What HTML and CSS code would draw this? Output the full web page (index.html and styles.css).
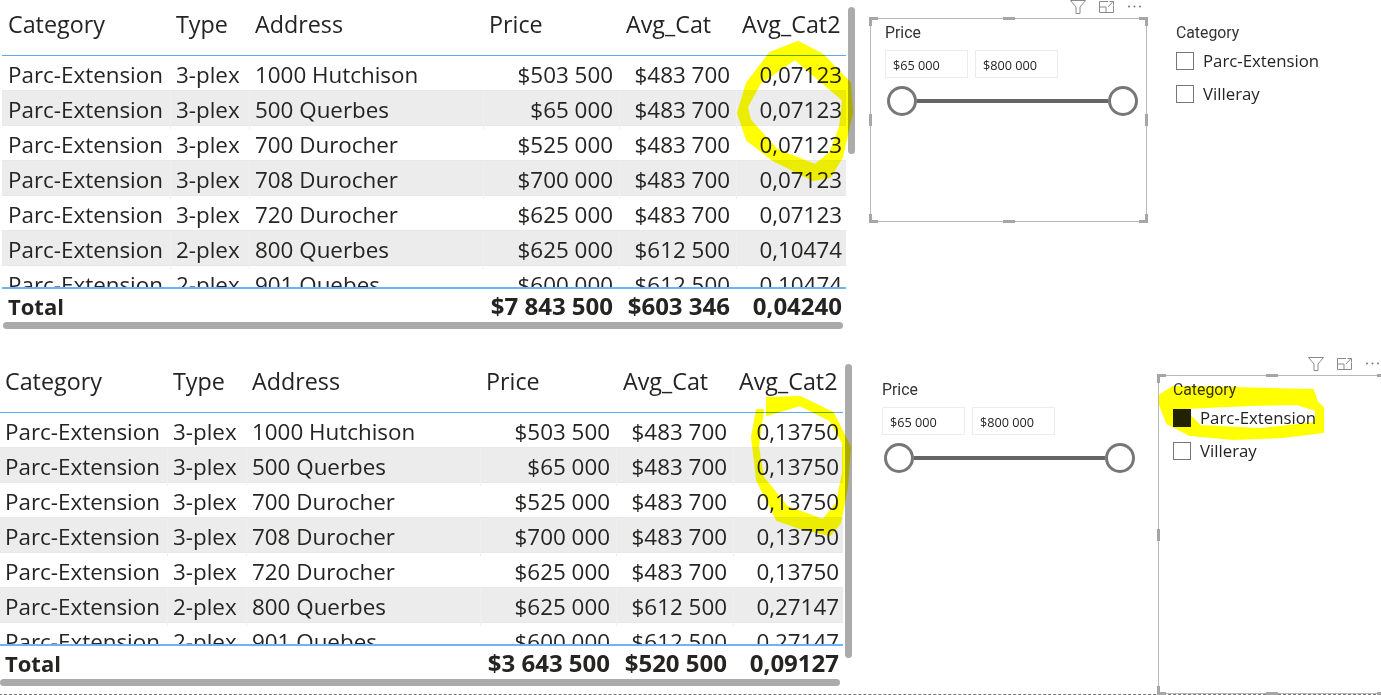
FILE: index.html
```html
<!DOCTYPE html>
<html>
<head>
	<title>Price slicer vs Category slicer</title>
	<link rel="stylesheet" href="styles.css">
</head>
<body>
	<div class="report">

		<!-- top: only the price slicer is selected -->
		<section class="page first">
			<div class="matrix">
				<div class="cols head">
					<div>Category</div><div>Type</div><div>Address</div><div>Price</div><div>Avg_Cat</div><div>Avg_Cat2</div>
				</div>
				<div class="rows">
					<div class="cols line"><div>Parc-Extension</div><div>3-plex</div><div>1000 Hutchison</div><div class="num">$503 500</div><div class="num">$483 700</div><div class="num">0,07123</div></div>
					<div class="cols line"><div>Parc-Extension</div><div>3-plex</div><div>500 Querbes</div><div class="num">$65 000</div><div class="num">$483 700</div><div class="num">0,07123</div></div>
					<div class="cols line"><div>Parc-Extension</div><div>3-plex</div><div>700 Durocher</div><div class="num">$525 000</div><div class="num">$483 700</div><div class="num">0,07123</div></div>
					<div class="cols line"><div>Parc-Extension</div><div>3-plex</div><div>708 Durocher</div><div class="num">$700 000</div><div class="num">$483 700</div><div class="num">0,07123</div></div>
					<div class="cols line"><div>Parc-Extension</div><div>3-plex</div><div>720 Durocher</div><div class="num">$625 000</div><div class="num">$483 700</div><div class="num">0,07123</div></div>
					<div class="cols line"><div>Parc-Extension</div><div>2-plex</div><div>800 Querbes</div><div class="num">$625 000</div><div class="num">$612 500</div><div class="num">0,10474</div></div>
					<div class="cols line"><div>Parc-Extension</div><div>2-plex</div><div>901 Quebes</div><div class="num">$600 000</div><div class="num">$612 500</div><div class="num">0,10474</div></div>
				</div>
				<div class="cols total">
					<div>Total</div><div></div><div></div><div class="num">$7 843 500</div><div class="num">$603 346</div><div class="num">0,04240</div>
				</div>
				<div class="vbar short"></div>
				<div class="hbar"></div>
			</div>

			<div class="slicer price selected">
				<div class="visual-head">
					<svg class="ico-filter" viewBox="0 0 16 14"><path d="M.5.5h15L10 7v6.5H6V7z"/></svg>
					<svg class="ico-focus" viewBox="0 0 15 12"><path d="M9 .5H.5v11h14V5M.5 6h6.500v5.500M9 6l5-5.500M10.500.500h4v4"/></svg>
					<svg class="ico-dots" viewBox="0 0 15 3"><circle cx="2" cy="1.500" r="1"/><circle cx="7.500" cy="1.500" r="1"/><circle cx="13" cy="1.500" r="1"/></svg>
				</div>
				<span class="grip tl"></span><span class="grip tr"></span><span class="grip bl"></span><span class="grip br"></span>
				<span class="grip tm"></span><span class="grip bm"></span><span class="grip ml"></span><span class="grip mr"></span>
				<div class="slicer-title">Price</div>
				<div class="inputs">
					<div class="input">$65 000</div>
					<div class="input">$800 000</div>
				</div>
				<div class="slider"><span class="knob"></span><span class="track"></span><span class="knob"></span></div>
			</div>

			<div class="slicer category">
				<div class="slicer-title">Category</div>
				<div class="option"><span class="box"></span>Parc-Extension</div>
				<div class="option"><span class="box"></span>Villeray</div>
			</div>
		</section>

		<!-- bottom: the category slicer is selected -->
		<section class="page second">
			<div class="matrix">
				<div class="cols head">
					<div>Category</div><div>Type</div><div>Address</div><div>Price</div><div>Avg_Cat</div><div>Avg_Cat2</div>
				</div>
				<div class="rows">
					<div class="cols line"><div>Parc-Extension</div><div>3-plex</div><div>1000 Hutchison</div><div class="num">$503 500</div><div class="num">$483 700</div><div class="num">0,13750</div></div>
					<div class="cols line"><div>Parc-Extension</div><div>3-plex</div><div>500 Querbes</div><div class="num">$65 000</div><div class="num">$483 700</div><div class="num">0,13750</div></div>
					<div class="cols line"><div>Parc-Extension</div><div>3-plex</div><div>700 Durocher</div><div class="num">$525 000</div><div class="num">$483 700</div><div class="num">0,13750</div></div>
					<div class="cols line"><div>Parc-Extension</div><div>3-plex</div><div>708 Durocher</div><div class="num">$700 000</div><div class="num">$483 700</div><div class="num">0,13750</div></div>
					<div class="cols line"><div>Parc-Extension</div><div>3-plex</div><div>720 Durocher</div><div class="num">$625 000</div><div class="num">$483 700</div><div class="num">0,13750</div></div>
					<div class="cols line"><div>Parc-Extension</div><div>2-plex</div><div>800 Querbes</div><div class="num">$625 000</div><div class="num">$612 500</div><div class="num">0,27147</div></div>
					<div class="cols line"><div>Parc-Extension</div><div>2-plex</div><div>901 Quebes</div><div class="num">$600 000</div><div class="num">$612 500</div><div class="num">0,27147</div></div>
				</div>
				<div class="cols total">
					<div>Total</div><div></div><div></div><div class="num">$3 643 500</div><div class="num">$520 500</div><div class="num">0,09127</div>
				</div>
				<div class="vbar long"></div>
				<div class="hbar"></div>
			</div>

			<div class="slicer price">
				<div class="slicer-title">Price</div>
				<div class="inputs">
					<div class="input">$65 000</div>
					<div class="input">$800 000</div>
				</div>
				<div class="slider"><span class="knob"></span><span class="track"></span><span class="knob"></span></div>
			</div>

			<div class="slicer category tall selected">
				<div class="visual-head">
					<svg class="ico-filter" viewBox="0 0 16 14"><path d="M.5.5h15L10 7v6.500H6V7z"/></svg>
					<svg class="ico-focus" viewBox="0 0 15 12"><path d="M9 .5H.5v11h14V5M.5 6h6.500v5.500M9 6l5-5.500M10.500.500h4v4"/></svg>
					<svg class="ico-dots" viewBox="0 0 15 3"><circle cx="2" cy="1.500" r="1"/><circle cx="7.500" cy="1.500" r="1"/><circle cx="13" cy="1.500" r="1"/></svg>
				</div>
				<span class="grip tl"></span><span class="grip tr"></span><span class="grip bl"></span><span class="grip br"></span>
				<span class="grip tm"></span><span class="grip bm"></span><span class="grip ml"></span><span class="grip mr"></span>
				<div class="slicer-title">Category</div>
				<div class="option"><span class="box checked"></span>Parc-Extension</div>
				<div class="option"><span class="box"></span>Villeray</div>
			</div>
		</section>

		<!-- marker scribbles drawn over the screenshot -->
		<svg class="marker" viewBox="0 0 1381 695">
			<path fill-rule="evenodd" d="M798 42L823 55L850 83L852 113L842 157L830 177L813 180L773 160L747 140L738 113L747 83L770 53ZM795 59L760 83L747 107L750 120L777 150L815 165L830 153L840 127L843 100Z"/>
			<path d="M767 398L800 397L833 413L850 447L847 487L840 523L830 535L800 528L777 520L757 480L752 437L757 410L763 410L758 447L763 477L787 507L823 520L837 503L843 473L843 443L830 420L800 405L767 415Z"/>
			<path fill-rule="evenodd" d="M1160 395L1173 387L1233 388L1313 390L1317 402L1323 408L1323 432L1283 437L1233 439L1190 435L1167 423L1160 405ZM1185 408L1183 410L1192 418L1200 426L1260 429L1316 423L1316 410L1297 404L1250 405Z"/>
		</svg>
	</div>
</body>
</html>
```

FILE: styles.css
```css
html, body {
	margin: 0;
	height: 100%;
	background: #fff;
	overflow: hidden;
}

.report {
	position: relative;
	width: 1381px;
	height: 695px;
	overflow: hidden;
	color: #252423;
	font-family: "Open Sans", "Noto Sans", sans-serif;
}

.page {
	display: flex;
	align-items: flex-start;
	box-sizing: border-box;
	height: 357px;
}
.first { padding-left: 2px; }
.second {
	height: 338px;
	margin-left: -1px;
	width: 1382px;
	border-bottom: 1px dashed #777;
}

/* table */
.matrix {
	position: relative;
	flex: none;
	width: 868px;
	padding-top: 8px;
}
.cols {
	display: grid;
	grid-template-columns: 168px 79px 234px 136px 117px 110px;
	width: 844px;
	font-size: 22.400px;
}
.cols > div {
	padding: 0 6px;
	white-space: nowrap;
}
.cols > div:last-child { padding-right: 4px; }
.num { text-align: right; }

.head {
	height: 47px;
	line-height: 32px;
	font-size: 23.300px;
	border-bottom: 1px solid #62a8ec;
}
.head > div:nth-child(5) { padding-left: 7px; }

.rows {
	height: 231px;
	overflow: hidden;
}
.line {
	box-sizing: border-box;
	height: 35px;
	line-height: 38px;
	border-bottom: 1px solid #e8e8e8;
}
.line:nth-child(even) { background: #ececec; }
.line:nth-child(even) > div + div { box-shadow: inset 1px 0 0 #f0f0f0; }

.total {
	height: 33px;
	line-height: 34px;
	border-top: 2px solid #6fb2f7;
	font-weight: 700;
	font-size: 22px;
}
.total .num { font-size: 24px; }

.vbar, .hbar {
	position: absolute;
	background: #ababab;
	border-radius: 4px;
}
.vbar {
	left: 846px;
	top: 7px;
	width: 7px;
}
.vbar.short { height: 147px; }
.vbar.long { height: 294px; }
.hbar {
	left: 1px;
	top: 322px;
	width: 840px;
	height: 7px;
}

/* slicers */
.slicer {
	position: relative;
	flex: none;
	box-sizing: border-box;
	margin-top: 18px;
	height: 204px;
	padding: 4px 14px;
	border: 1px solid transparent;
}
.slicer.selected { border-color: #b8b8b8; }
.price { width: 277px; }
.category {
	width: 227px;
	margin-left: 14px;
}
.category.tall { height: 319px; }

.slicer-title {
	height: 21px;
	line-height: 20px;
	font-family: Roboto, sans-serif;
	font-size: 15.800px;
	color: #333;
}

.inputs {
	display: flex;
	gap: 7px;
	margin-top: 6px;
}
.input {
	box-sizing: border-box;
	width: 83px;
	height: 28px;
	line-height: 28px;
	padding-left: 7px;
	border: 1px solid #ececec;
	font-size: 12.700px;
}

.slider {
	display: flex;
	align-items: center;
	width: 251px;
	margin: 8px 0 0 2px;
}
.knob {
	flex: none;
	box-sizing: border-box;
	width: 30px;
	height: 30px;
	border: 3px solid #777;
	border-radius: 50%;
}
.track {
	flex: 1;
	height: 4px;
	background: #666;
}

.option {
	display: flex;
	align-items: center;
	height: 33px;
	font-size: 16.800px;
}
.box {
	flex: none;
	box-sizing: border-box;
	width: 18px;
	height: 18px;
	margin-right: 9px;
	border: 1px solid #777;
}
.box.checked {
	background: #222;
	border-color: #222;
}

/* selection frame */
.grip {
	position: absolute;
	background: #a6a6a6;
}
.tl, .tr, .bl, .br {
	width: 9px;
	height: 9px;
	background: none;
	border: 0 solid #a6a6a6;
	box-sizing: border-box;
}
.tl { left: -2px; top: -2px; border-width: 3px 0 0 3px; }
.tr { right: -2px; top: -2px; border-width: 3px 3px 0 0; }
.bl { left: -2px; bottom: -2px; border-width: 0 0 3px 3px; }
.br { right: -2px; bottom: -2px; border-width: 0 3px 3px 0; }
.tm, .bm {
	left: 50%;
	width: 12px;
	height: 3px;
	margin-left: -6px;
}
.tm { top: -2px; }
.bm { bottom: -2px; }
.ml, .mr {
	top: 50%;
	width: 3px;
	height: 12px;
	margin-top: -6px;
}
.ml { left: -2px; }
.mr { right: -2px; }

.visual-head {
	position: absolute;
	top: -20px;
	right: 4px;
	display: flex;
	align-items: center;
	gap: 13px;
	height: 15px;
}
.visual-head svg {
	display: block;
	fill: none;
	stroke: #8a8a8a;
	stroke-width: 1;
}
.ico-filter { width: 16px; height: 14px; }
.ico-focus { width: 15px; height: 12px; }
.ico-dots { width: 15px; height: 3px; }
.ico-dots circle { fill: #777; stroke: none; }

/* yellow marker */
.marker {
	position: absolute;
	left: 0;
	top: 0;
	width: 1381px;
	height: 695px;
	mix-blend-mode: multiply;
	pointer-events: none;
}
.marker path {
	fill: #ff0;
	stroke: #ff0;
	stroke-width: 2;
	stroke-linejoin: round;
}
```
